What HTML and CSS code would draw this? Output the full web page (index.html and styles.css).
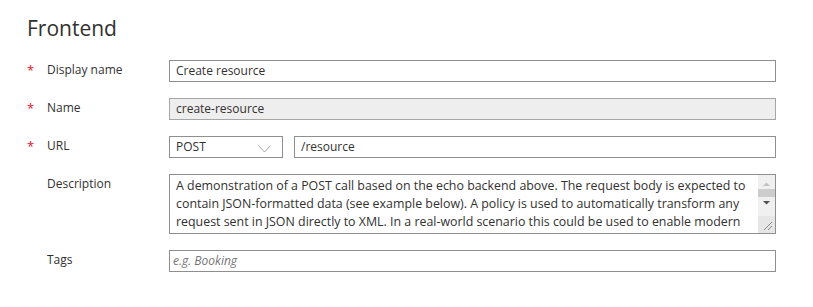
FILE: index.html
```html
<!DOCTYPE html>
<html>
<head>
<meta charset="utf-8">
<link rel="stylesheet" href="styles.css">
</head>
<body>
<div class="page">
  <h1 class="title">Frontend</h1>
  <div class="form">
    <span class="req">*</span>
    <label class="label">Display name</label>
    <div class="field"><div class="input">Create resource</div></div>

    <span class="req">*</span>
    <label class="label">Name</label>
    <div class="field"><div class="input disabled">create-resource</div></div>

    <span class="req">*</span>
    <label class="label">URL</label>
    <div class="field url">
      <div class="select">
        <span>POST</span>
        <svg class="chev" width="13" height="8" viewBox="0 0 13 8"><path d="M0.5 0.5 L6.5 7 L12.5 0.5" fill="none" stroke="#a6a6a6" stroke-width="1"/></svg>
      </div>
      <div class="input path">/resource</div>
    </div>

    <span class="req"></span>
    <label class="label">Description</label>
    <div class="field">
      <div class="textarea">
        <div class="ta-text">A demonstration of a POST call based on the echo backend above. The request body is expected to<br>contain JSON-formatted data (see example below). A policy is used to automatically transform any<br>request sent in JSON directly to XML. In a real-world scenario this could be used to enable modern</div>
        <div class="scroll">
          <svg class="arrow" width="17" height="8" viewBox="0 0 17 8"><path d="M5 6 L8.5 2.5 L12 6 Z" fill="#c1c1c1"/></svg>
          <div class="thumb"></div>
          <svg class="arrow" width="17" height="8" viewBox="0 0 17 8"><path d="M5 2 L8.5 5.5 L12 2 Z" fill="#505050"/></svg>
          <div class="grip">
            <svg width="17" height="17" viewBox="0 0 17 17"><path d="M14 6 L6 14 M14 10 L10 14" stroke="#8a8a8a" stroke-width="1"/></svg>
          </div>
        </div>
      </div>
    </div>

    <span class="req"></span>
    <label class="label">Tags</label>
    <div class="field"><div class="input placeholder">e.g. Booking</div></div>
  </div>
</div>
</body>
</html>
```

FILE: styles.css
```css
html, body {
  margin: 0;
  padding: 0;
  background: #ffffff;
}
body {
  font-family: "Open Sans", "Noto Sans", sans-serif;
  color: #323130;
  font-size: 12px;
}
.page {
  padding: 12px 37px 0 27px;
}
.title {
  margin: 0;
  font-size: 21px;
  font-weight: 400;
  line-height: 32px;
  color: #323130;
}
.form {
  margin-top: 16px;
  display: grid;
  grid-template-columns: 20px 122px 607px;
  row-gap: 16px;
}
.req {
  color: #e81123;
  font-size: 13px;
  line-height: 20px;
}
.label {
  line-height: 20px;
  font-size: 12px;
}
.field {
  display: flex;
}
.input {
  box-sizing: border-box;
  flex: 1;
  height: 22px;
  border: 1px solid #8f8f8f;
  padding: 0 6px;
  line-height: 20px;
  white-space: nowrap;
}
.input.disabled {
  background: #eeeeee;
  border-color: #a6a6a6;
}
.input.placeholder {
  font-style: italic;
  color: #767676;
  padding-left: 3px;
}
.url {
  gap: 11px;
}
.select {
  box-sizing: border-box;
  width: 114px;
  height: 22px;
  border: 1px solid #8f8f8f;
  padding: 0 6px;
  line-height: 20px;
  display: flex;
  align-items: center;
  justify-content: space-between;
}
.chev {
  margin-right: 5px;
  margin-top: 3px;
}
.textarea {
  box-sizing: border-box;
  flex: 1;
  height: 60px;
  border: 1px solid #8f8f8f;
  display: flex;
}
.ta-text {
  flex: 1;
  padding: 2px 6px;
  font-size: 12.4px;
  line-height: 18px;
  white-space: nowrap;
  overflow: hidden;
}
.scroll {
  width: 17px;
  background: #f0f0f0;
  display: flex;
  flex-direction: column;
  align-items: center;
  padding-top: 5px;
}
.thumb {
  width: 17px;
  height: 8px;
  background: #cdcdcd;
  margin: 1px 0 2px;
}
.grip {
  margin-top: auto;
  width: 17px;
  height: 17px;
  background: #e6e6e6;
}
.grip svg {
  display: block;
}
```
